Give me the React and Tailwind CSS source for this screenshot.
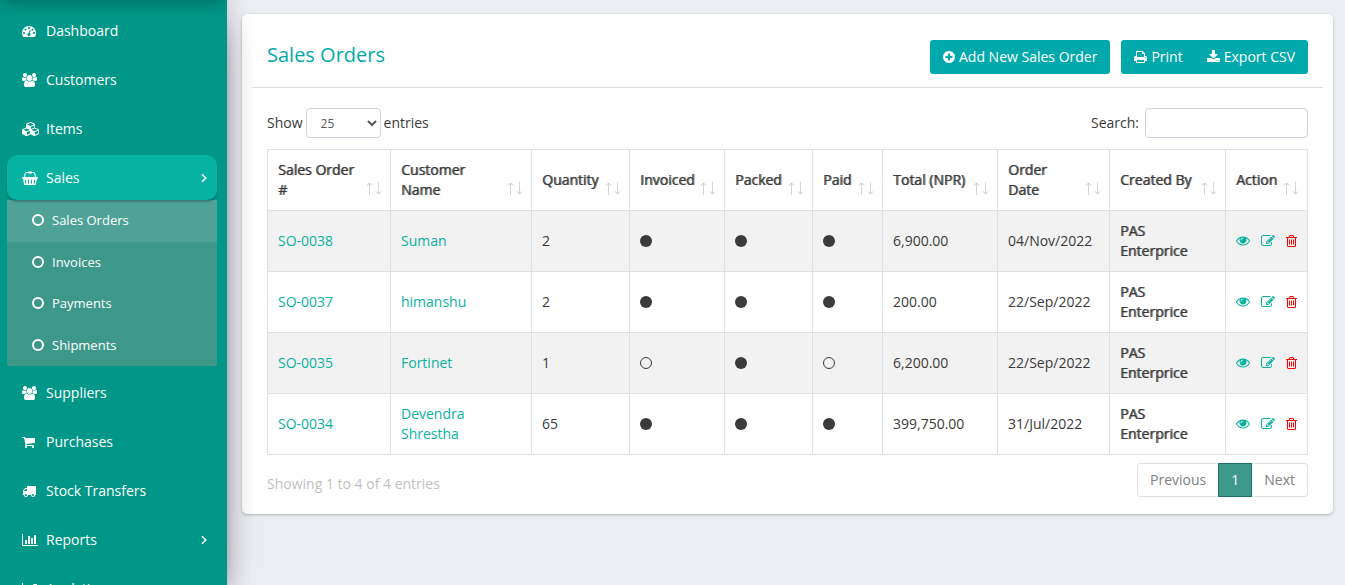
import React, { useState } from 'react';
import clsx from 'clsx';

const ICONS = {
  dashboard: {
    box: '0 0 1792 1792',
    width: 'w-[14px]',
    d: 'M384 1152q0-53-37.5-90.5t-90.5-37.5-90.5 37.5-37.5 90.5 37.5 90.5 90.5 37.5 90.5-37.5 37.5-90.5zm192-448q0-53-37.5-90.5t-90.5-37.5-90.5 37.5-37.5 90.5 37.5 90.5 90.5 37.5 90.5-37.5 37.5-90.5zm428 481l101-382q6-26-7.5-48.5t-38.5-29.5-48 6.5-30 39.5l-101 382q-60 5-107 43.5t-63 98.5q-20 77 20 146t117 89 146-20 89-117q16-60-6-117t-72-91zm660-33q0-53-37.5-90.5t-90.5-37.5-90.5 37.5-37.5 90.5 37.5 90.5 90.5 37.5 90.5-37.5 37.5-90.5zm-640-640q0-53-37.5-90.5t-90.5-37.5-90.5 37.5-37.5 90.5 37.5 90.5 90.5 37.5 90.5-37.5 37.5-90.5zm448 192q0-53-37.5-90.5t-90.5-37.5-90.5 37.5-37.5 90.5 37.5 90.5 90.5 37.5 90.5-37.5 37.5-90.5zm320 448q0 261-141 483-19 29-54 29h-1402q-35 0-54-29-141-221-141-483 0-182 71-348t191-286 286-191 348-71 348 71 286 191 191 286 71 348z',
  },
  users: {
    box: '0 0 1920 1792',
    width: 'w-[15px]',
    d: 'M593 896q-162 5-265 128h-134q-82 0-138-40.5t-56-118.5q0-353 124-353 6 0 43.5 21t97.5 42.5 119 21.5q67 0 133-23-5 37-5 66 0 159 93 293zm1071 637q0 120-73 189.5t-194 69.5h-874q-121 0-194-69.5t-73-189.5q0-53 3.5-103.5t14-109 26.5-108.5 43-97.5 62-81 85.5-53.5 111.5-20q10 0 43 21.5t73 48 107 48 135 21.5 135-21.5 107-48 73-48 43-21.5q61 0 111.5 20t85.5 53.5 62 81 43 97.5 26.5 108.5 14 109 3.5 103.5zm-1024-1277q0 106-75 181t-181 75-181-75-75-181 75-181 181-75 181 75 75 181zm704 384q0 159-112.5 271.5t-271.5 112.5-271.5-112.5-112.5-271.5 112.5-271.5 271.5-112.5 271.5 112.5 112.5 271.5zm576 225q0 78-56 118.5t-138 40.5h-134q-103-123-265-128 93-134 93-293 0-29-5-66 66 23 133 23 59 0 119-21.5t97.5-42.5 43.5-21q124 0 124 353zm-128-609q0 106-75 181t-181 75-181-75-75-181 75-181 181-75 181 75 75 181z',
  },
  cubes: {
    box: '0 0 2304 1792',
    width: 'w-[18px]',
    d: 'M640 1632l384-192v-314l-384 164v342zm-64-454l404-173-404-173-404 173zm1088 454l384-192v-314l-384 164v342zm-64-454l404-173-404-173-404 173zm-448-293l384-165v-266l-384 164v267zm-64-379l441-189-441-189-441 189zm1088 518v416q0 36-19 67t-52 47l-448 224q-25 14-57 14t-57-14l-448-224q-4-2-7-4-2 2-7 4l-448 224q-25 14-57 14t-57-14l-448-224q-33-16-52-47t-19-67v-416q0-38 21.5-70t56.5-48l434-186v-400q0-38 21.5-70t56.5-48l448-192q23-10 50-10t50 10l448 192q35 16 56.5 48t21.5 70v400l434 186q36 16 57 48t21 70z',
  },
  basket: {
    box: '0 0 2048 1792',
    width: 'w-[16px]',
    d: 'M1920 768q53 0 90.5 37.5t37.5 90.5-37.5 90.5-90.5 37.5h-15l-115 662q-8 46-44 76t-82 30h-1280q-46 0-82-30t-44-76l-115-662h-15q-53 0-90.5-37.5t-37.5-90.5 37.5-90.5 90.5-37.5h1792zm-1435 864q26-2 43.5-22.5t15.5-46.5l-32-416q-2-26-22.5-43.5t-46.5-15.5-43.5 22.5-15.5 46.5l32 416q2 25 20.5 42t43.5 17h5zm411-64v-416q0-26-19-45t-45-19-45 19-19 45v416q0 26 19 45t45 19 45-19 19-45zm384 0v-416q0-26-19-45t-45-19-45 19-19 45v416q0 26 19 45t45 19 45-19 19-45zm352 5l32-416q2-26-15.5-46.5t-43.5-22.5-46.5 15.5-22.5 43.5l-32 416q-2 26 15.5 46.5t43.5 22.5h5q25 0 43.5-17t20.5-42zm-1156-1217l-93 412h-132l101-441q19-88 89-143.5t160-55.5h167q0-26 19-45t45-19h384q26 0 45 19t19 45h167q90 0 160 55.5t89 143.5l101 441h-132l-93-412q-11-44-45.5-72t-79.5-28h-167q0 26-19 45t-45 19h-384q-26 0-45-19t-19-45h-167q-45 0-79.5 28t-45.5 72z',
  },
  cart: {
    box: '64 0 1664 1792',
    width: 'w-[13px]',
    d: 'M704 1536q0 52-38 90t-90 38-90-38-38-90 38-90 90-38 90 38 38 90zm896 0q0 52-38 90t-90 38-90-38-38-90 38-90 90-38 90 38 38 90zm128-1088v512q0 24-16.5 42.5t-40.5 21.5l-1044 122q13 60 13 70 0 16-24 64h920q26 0 45 19t19 45-19 45-45 19h-1024q-26 0-45-19t-19-45q0-11 8-31.5t16-36 21.5-40 15.5-29.5l-177-823h-204q-26 0-45-19t-19-45 19-45 45-19h256q16 0 28.5 6.5t19.5 15.5 13 24.5 8 26 5.5 29.5 4.5 26h1201q26 0 45 19t19 45z',
  },
  truck: {
    box: '0 0 1792 1792',
    width: 'w-[14px]',
    d: 'M640 1408q0-52-38-90t-90-38-90 38-38 90 38 90 90 38 90-38 38-90zm-384-512h384v-256h-158q-13 0-22 9l-195 195q-9 9-9 22v30zm1280 512q0-52-38-90t-90-38-90 38-38 90 38 90 90 38 90-38 38-90zm256-1088v1024q0 15-4 26.5t-13.5 18.5-16.5 11.5-23.5 6-22.5 2-25.5 0-22.5-.5q0 106-75 181t-181 75-181-75-75-181h-384q0 106-75 181t-181 75-181-75-75-181h-64q-3 0-22.5.5t-25.5 0-22.5-2-23.5-6-16.5-11.5-13.5-18.5-4-26.5q0-26 19-45t45-19v-320q0-8-.5-35t0-38 2.5-34.5 6.5-37 14-30.5 22.5-30l198-198q19-19 50.5-32t58.5-13h160v-192q0-26 19-45t45-19h1024q26 0 45 19t19 45z',
  },
  barChart: {
    box: '0 0 2048 1792',
    width: 'w-[16px]',
    d: 'M640 896v512h-256v-512h256zm384-512v1024h-256v-1024h256zm1024 1152v128h-2048v-1536h128v1408h1920zm-640-896v768h-256v-768h256zm384-384v1152h-256v-1152h256z',
  },
  lineChart: {
    box: '0 0 2048 1792',
    width: 'w-[16px]',
    d: 'M2048 1536v128h-2048v-1536h128v1408h1920zm-128-1248v435q0 21-19.5 29.5t-35.5-7.5l-121-121-633 633q-10 10-23 10t-23-10l-233-233-416 416-192-192 585-585q10-10 23-10t23 10l233 233 464-464-121-121q-16-16-7.5-35.5t29.5-19.5h435q14 0 23 9t9 23z',
  },
  plusCircle: {
    box: '128 0 1536 1792',
    width: 'w-[12px]',
    d: 'M1344 960v-128q0-26-19-45t-45-19h-256v-256q0-26-19-45t-45-19h-128q-26 0-45 19t-19 45v256h-256q-26 0-45 19t-19 45v128q0 26 19 45t45 19h256v256q0 26 19 45t45 19h128q26 0 45-19t19-45v-256h256q26 0 45-19t19-45zm320-64q0 209-103 385.5t-279.5 279.5-385.5 103-385.5-103-279.5-279.5-103-385.5 103-385.5 279.5-279.5 385.5-103 385.5 103 279.5 279.5 103 385.5z',
  },
  print: {
    box: '64 0 1664 1792',
    width: 'w-[13px]',
    d: 'M448 1536h896v-256h-896v256zm0-640h896v-384h-160q-40 0-68-28t-28-68v-160h-640v640zm1152 64q0-26-19-45t-45-19-45 19-19 45 19 45 45 19 45-19 19-45zm128 0v416q0 13-9.5 22.5t-22.5 9.5h-224v160q0 40-28 68t-68 28h-960q-40 0-68-28t-28-68v-160h-224q-13 0-22.5-9.5t-9.5-22.5v-416q0-79 56.5-135.5t135.5-56.5h64v-544q0-40 28-68t68-28h672q40 0 88 20t76 48l152 152q28 28 48 76t20 88v256h64q79 0 135.5 56.5t56.5 135.5z',
  },
  download: {
    box: '64 0 1664 1792',
    width: 'w-[13px]',
    d: 'M1344 1344q0-26-19-45t-45-19-45 19-19 45 19 45 45 19 45-19 19-45zm256 0q0-26-19-45t-45-19-45 19-19 45 19 45 45 19 45-19 19-45zm128-224v320q0 40-28 68t-68 28h-1472q-40 0-68-28t-28-68v-320q0-40 28-68t68-28h465l135 136q58 56 136 56t136-56l136-136h464q40 0 68 28t28 68zm-325-569q17 41-14 70l-448 448q-18 19-45 19t-45-19l-448-448q-31-29-14-70 17-39 59-39h256v-448q0-26 19-45t45-19h256q26 0 45 19t19 45v448h256q42 0 59 39z',
  },
  eye: {
    box: '0 64 1792 1792',
    width: 'w-[14px]',
    d: 'M1664 960q-152-236-381-353 61 104 61 225 0 185-131.5 316.5t-316.5 131.5-316.5-131.5-131.5-316.5q0-121 61-225-229 117-381 353 133 205 333.5 326.5t434.5 121.5 434.5-121.5 333.5-326.5zm-720-384q0-20-14-34t-34-14q-125 0-214.5 89.5t-89.5 214.5q0 20 14 34t34 14 34-14 14-34q0-86 61-147t147-61q20 0 34-14t14-34zm848 384q0 34-20 69-140 230-376.5 368.5t-499.5 138.5-499.5-139-376.5-368q-20-35-20-69t20-69q140-229 376.5-368t499.5-139 499.5 139 376.5 368q20 35 20 69z',
  },
  edit: {
    box: '0 0 1792 1792',
    width: 'w-[14px]',
    d: 'M888 1184l116-116-152-152-116 116v56h96v96h56zm440-720q-16-16-33 1l-350 350q-17 17-1 33t33-1l350-350q17-17 1-33zm80 594v190q0 119-84.5 203.5t-203.5 84.5h-832q-119 0-203.5-84.5t-84.5-203.5v-832q0-119 84.5-203.5t203.5-84.5h832q63 0 117 25 15 7 18 23 3 17-9 29l-49 49q-14 14-32 8-23-6-45-6h-832q-66 0-113 47t-47 113v832q0 66 47 113t113 47h832q66 0 113-47t47-113v-126q0-13 9-22l64-64q15-15 35-7t20 29zm-96-738l288 288-672 672h-288v-288zm444 132l-92 92-288-288 92-92q28-28 68-28t68 28l152 152q28 28 28 68t-28 68z',
  },
  trash: {
    box: '192 0 1408 1792',
    width: 'w-[11px]',
    d: 'M704 736v576q0 14-9 23t-23 9h-64q-14 0-23-9t-9-23v-576q0-14 9-23t23-9h64q14 0 23 9t9 23zm256 0v576q0 14-9 23t-23 9h-64q-14 0-23-9t-9-23v-576q0-14 9-23t23-9h64q14 0 23 9t9 23zm256 0v576q0 14-9 23t-23 9h-64q-14 0-23-9t-9-23v-576q0-14 9-23t23-9h64q14 0 23 9t9 23zm128 724v-948h-896v948q0 22 7 40.5t14.5 27 10.5 8.5h832q3 0 10.5-8.5t14.5-27 7-40.5zm-672-1076h448l-48-117q-7-9-17-11h-317q-10 2-17 11zm928 32v64q0 14-9 23t-23 9h-96v948q0 83-47 143.5t-113 60.5h-832q-66 0-113-58.5t-47-141.5v-952h-96q-14 0-23-9t-9-23v-64q0-14 9-23t23-9h309l70-167q15-37 54-63t79-26h320q40 0 79 26t54 63l70 167h309q14 0 23 9t9 23z',
  },
};

const Icon = ({ name }) => (
  <svg
    viewBox={ICONS[name].box}
    className={clsx('h-[14px] shrink-0', ICONS[name].width)}
    fill="currentColor"
    aria-hidden="true"
  >
    <path d={ICONS[name].d} />
  </svg>
);

const Chevron = () => (
  <svg viewBox="0 0 6 10" className="w-[6px] h-[10px]" fill="none" stroke="currentColor" strokeWidth="1.6" aria-hidden="true">
    <path d="M1 1.2L4.8 5L1 8.8" />
  </svg>
);

const Ring = () => (
  <svg viewBox="0 0 12 12" className="w-3 h-3 shrink-0" fill="none" stroke="currentColor" strokeWidth="2" aria-hidden="true">
    <circle cx="6" cy="6" r="5" />
  </svg>
);

const StatusDot = ({ on, label }) => (
  <svg viewBox="0 0 12 12" className="w-3 h-3" role="img" aria-label={label}>
    {on ? (
      <circle cx="6" cy="6" r="6" fill="#3a3a3a" />
    ) : (
      <circle cx="6" cy="6" r="5.5" fill="none" stroke="#3a3a3a" />
    )}
  </svg>
);

const SortArrows = () => (
  <svg
    viewBox="0 0 16 13"
    className="absolute right-2 bottom-[15px] w-4 h-[13px]"
    fill="none"
    aria-hidden="true"
  >
    <path d="M3.5 1v12M12.5 0v12" stroke="#d6d6d6" />
    <path d="M1 3.5L3.5 1L6 3.5M10 9.5L12.5 12L15 9.5" stroke="#c6c6c6" />
  </svg>
);

const menu = [
  { label: 'Dashboard', icon: 'dashboard' },
  { label: 'Customers', icon: 'users' },
  { label: 'Items', icon: 'cubes' },
  {
    label: 'Sales',
    icon: 'basket',
    active: true,
    arrow: true,
    children: ['Sales Orders', 'Invoices', 'Payments', 'Shipments'],
  },
  { label: 'Suppliers', icon: 'users' },
  { label: 'Purchases', icon: 'cart' },
  { label: 'Stock Transfers', icon: 'truck' },
  { label: 'Reports', icon: 'barChart', arrow: true },
  { label: 'Analytics', icon: 'lineChart' },
];

const columns = [
  { label: 'Sales Order #', width: 'w-[123px]' },
  { label: 'Customer Name', width: 'w-[141px]' },
  { label: 'Quantity', width: 'w-[98px]' },
  { label: 'Invoiced', width: 'w-[95px]' },
  { label: 'Packed', width: 'w-[88px]' },
  { label: 'Paid', width: 'w-[70px]' },
  { label: 'Total (NPR)', width: 'w-[115px]' },
  { label: 'Order Date', width: 'w-[112px]' },
  { label: 'Created By', width: 'w-[116px]' },
  { label: 'Action', width: 'w-[82px]' },
];

const orders = [
  { id: 'SO-0038', customer: 'Suman', qty: 2, invoiced: true, packed: true, paid: true, total: '6,900.00', date: '04/Nov/2022' },
  { id: 'SO-0037', customer: 'himanshu', qty: 2, invoiced: true, packed: true, paid: true, total: '200.00', date: '22/Sep/2022' },
  { id: 'SO-0035', customer: 'Fortinet', qty: 1, invoiced: false, packed: true, paid: false, total: '6,200.00', date: '22/Sep/2022' },
  { id: 'SO-0034', customer: 'Devendra Shrestha', qty: 65, invoiced: true, packed: true, paid: true, total: '399,750.00', date: '31/Jul/2022' },
];

const Sidebar = () => (
  <aside className="relative z-10 w-[227px] shrink-0 bg-[#009788] text-white shadow-[0_16px_38px_-12px_rgba(0,0,0,0.56),0_4px_25px_0_rgba(0,0,0,0.12),0_8px_10px_-5px_rgba(0,0,0,0.2)]">
    <div className="absolute left-0 -top-14 w-full h-14 shadow-[0_4px_20px_0_rgba(0,0,0,0.14),0_7px_12px_-5px_rgba(0,0,0,0.15)]" />
    <nav className="h-full overflow-hidden pt-2 pl-[7px] pr-[10px]">
      <ul>
        {menu.map((item) => (
          <li key={item.label} className="mb-1">
            <a
              href="#"
              className={clsx(
                'relative flex items-center h-[45px] pl-[15px] pr-[10px]',
                item.active && 'bg-[#06b3a3] rounded-[10px] shadow-[0_2px_2px_rgba(0,0,0,0.25)]'
              )}
            >
              <span className="w-6 flex">
                <Icon name={item.icon} />
              </span>
              <span className="flex-1">{item.label}</span>
              {item.arrow && <Chevron />}
            </a>
            {item.children && (
              <ul className="grid auto-rows-fr h-[166px] bg-[#3d988a] text-[13px]">
                {item.children.map((child, i) => (
                  <li key={child} className={clsx(i === 0 && 'bg-[#4fa396]')}>
                    <a href="#" className="flex items-center h-full gap-2 pl-[25px] pb-px">
                      <Ring />
                      {child}
                    </a>
                  </li>
                ))}
              </ul>
            )}
          </li>
        ))}
      </ul>
    </nav>
  </aside>
);

const OrdersTable = ({ rows }) => (
  <table className="w-full table-fixed border-collapse text-left">
    <thead>
      <tr>
        {columns.map((col) => (
          <th
            key={col.label}
            className={clsx(
              'relative border border-[#dee2e6] p-[10px] pr-[30px] font-normal [text-shadow:1px_0_0_rgba(58,58,58,0.7)]',
              col.width
            )}
          >
            {col.label}
            <SortArrows />
          </th>
        ))}
      </tr>
    </thead>
    <tbody>
      {rows.map((row) => (
        <tr key={row.id} className="odd:bg-[#f2f2f2] [&>td]:border [&>td]:border-[#dee2e6] [&>td]:p-[10px]">
          <td><a href="#" className="text-[#0ab1a0]">{row.id}</a></td>
          <td><a href="#" className="text-[#0ab1a0]">{row.customer}</a></td>
          <td>{row.qty}</td>
          <td><StatusDot on={row.invoiced} label="Invoiced" /></td>
          <td><StatusDot on={row.packed} label="Packed" /></td>
          <td><StatusDot on={row.paid} label="Paid" /></td>
          <td>{row.total}</td>
          <td>{row.date}</td>
          <td className="[text-shadow:1px_0_0_rgba(58,58,58,0.7)]">PAS<br />Enterprice</td>
          <td>
            <div className="flex gap-[11px] text-[#0ab1a0]">
              <a href="#" aria-label="View"><Icon name="eye" /></a>
              <a href="#" aria-label="Edit"><Icon name="edit" /></a>
              <a href="#" aria-label="Delete" className="text-[#ff0000]"><Icon name="trash" /></a>
            </div>
          </td>
        </tr>
      ))}
    </tbody>
  </table>
);

export default function App() {
  const [search, setSearch] = useState('');
  const rows = orders.filter((o) =>
    `${o.id} ${o.customer}`.toLowerCase().includes(search.toLowerCase())
  );

  return (
    <div className="flex h-screen overflow-hidden bg-[#ebeef3] font-['Open_Sans',sans-serif] text-[14px] leading-5 text-[#3a3a3a]">
      <Sidebar />
      <main className="flex-1 min-w-0 pt-[14px] pl-[15px] pr-3">
        <div className="bg-white rounded-[5px] p-[10px] shadow-[0_1px_3px_rgba(0,0,0,0.25)]">
          {/* Title and actions */}
          <div className="flex items-start justify-between border-b border-[#dee0e2] px-[15px] pt-4 pb-[13px]">
            <h1 className="text-[20px] leading-[30px] text-[#01a9ac]">Sales Orders</h1>
            <div className="flex gap-[11px] text-white">
              <button className="flex items-center gap-1 h-[34px] px-[13px] rounded-[3px] bg-[#01a9ac]">
                <Icon name="plusCircle" />
                Add New Sales Order
              </button>
              <div className="flex rounded-[3px] overflow-hidden bg-[#01a9ac]">
                <button className="flex items-center gap-1 h-[34px] pl-[13px] pr-3">
                  <Icon name="print" />
                  Print
                </button>
                <button className="flex items-center gap-1 h-[34px] pl-3 pr-[13px]">
                  <Icon name="download" />
                  Export CSV
                </button>
              </div>
            </div>
          </div>

          <div className="px-[15px] pt-5 pb-[7px]">
            {/* Length and search */}
            <div className="flex items-start justify-between mb-[11px]">
              <label className="flex items-baseline gap-[3px]">
                Show
                <select
                  defaultValue="25"
                  className="h-[30px] w-[75px] pl-[10px] rounded-[4px] border border-[#d0d3de] bg-white text-[12px] text-[#55595c]"
                >
                  <option>10</option>
                  <option>25</option>
                  <option>50</option>
                </select>
                entries
              </label>
              <label className="flex items-baseline gap-[6px]">
                Search:
                <input
                  type="text"
                  value={search}
                  onChange={(e) => setSearch(e.target.value)}
                  className="h-[30px] w-[163px] px-2 rounded-[4px] border border-[#d0d3de] text-[12px] outline-none"
                />
              </label>
            </div>

            <OrdersTable rows={rows} />

            {/* Pagination */}
            <div className="flex items-center justify-between mt-2">
              <p className="pt-2 text-[#bfbfbf]">Showing 1 to 4 of 4 entries</p>
              <div className="flex h-[34px] text-[#808080]">
                <button className="px-3 rounded-l-[4px] border border-r-0 border-[#dee2e6]">Previous</button>
                <button className="px-3 border border-[#1f7366] bg-[#3d988a] text-white">1</button>
                <button className="px-3 rounded-r-[4px] border border-l-0 border-[#dee2e6]">Next</button>
              </div>
            </div>
          </div>
        </div>
      </main>
    </div>
  );
}
